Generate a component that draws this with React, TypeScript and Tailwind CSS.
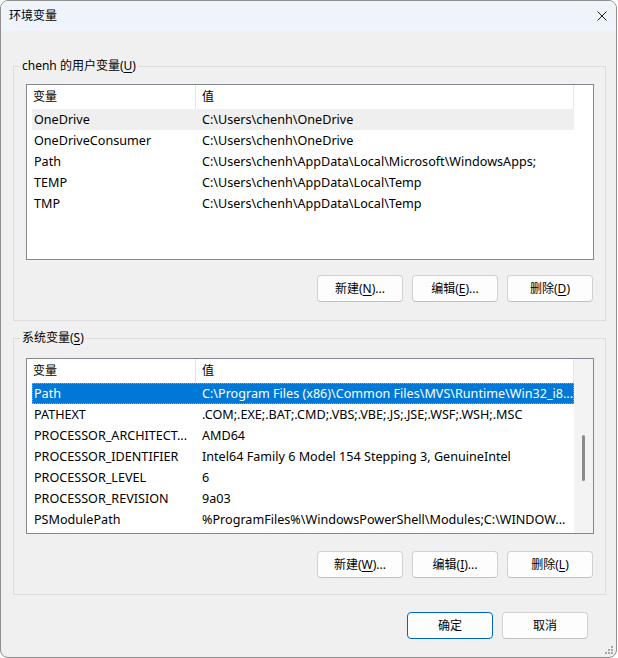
import type { ReactNode } from "react"
import clsx from "clsx"

type EnvVar = { name: string; value: string }

const userVars: EnvVar[] = [
  { name: "OneDrive", value: "C:\\Users\\chenh\\OneDrive" },
  { name: "OneDriveConsumer", value: "C:\\Users\\chenh\\OneDrive" },
  { name: "Path", value: "C:\\Users\\chenh\\AppData\\Local\\Microsoft\\WindowsApps;" },
  { name: "TEMP", value: "C:\\Users\\chenh\\AppData\\Local\\Temp" },
  { name: "TMP", value: "C:\\Users\\chenh\\AppData\\Local\\Temp" },
]

const systemVars: EnvVar[] = [
  { name: "Path", value: "C:\\Program Files (x86)\\Common Files\\MVS\\Runtime\\Win32_i8..." },
  { name: "PATHEXT", value: ".COM;.EXE;.BAT;.CMD;.VBS;.VBE;.JS;.JSE;.WSF;.WSH;.MSC" },
  { name: "PROCESSOR_ARCHITECT...", value: "AMD64" },
  { name: "PROCESSOR_IDENTIFIER", value: "Intel64 Family 6 Model 154 Stepping 3, GenuineIntel" },
  { name: "PROCESSOR_LEVEL", value: "6" },
  { name: "PROCESSOR_REVISION", value: "9a03" },
  { name: "PSModulePath", value: "%ProgramFiles%\\WindowsPowerShell\\Modules;C:\\WINDOW..." },
]

/** 带下划线的快捷键字母 */
function Accel({ children }: { children: ReactNode }) {
  return <span className="underline underline-offset-[2px]">{children}</span>
}

function WinButton({ children, isDefault }: { children: ReactNode; isDefault?: boolean }) {
  return (
    <button
      type="button"
      className={clsx(
        "flex h-[27px] w-[86px] items-center justify-center rounded-[4px] border bg-[#fdfdfd] text-[12px] leading-none text-black",
        isDefault ? "border-[#0067c0]" : "border-[#d0d0d0] border-b-[#c2c2c2]"
      )}
    >
      {children}
    </button>
  )
}

function VarList({
  vars,
  hoverRow,
  selectedRow,
  scrollbar,
}: {
  vars: EnvVar[]
  hoverRow?: number
  selectedRow?: number
  scrollbar?: boolean
}) {
  return (
    <div className="flex h-[176px] border border-[#828790] bg-white text-[12.6px]">
      <div className="flex w-[547px] flex-col">
        {/* 表头 */}
        <div className="flex h-[24px] shrink-0 items-center text-[12px]">
          <div className="flex h-full w-[169px] items-center border-r border-[#e5e5e5] pl-[6px]">变量</div>
          <div className="flex h-full w-[378px] items-center border-r border-[#e5e5e5] pl-[6px]">值</div>
        </div>

        {/* 行 */}
        <div className="flex flex-col pl-[5px]">
          {vars.map((v, i) => (
            <div
              key={v.name}
              className={clsx(
                "flex h-[21px] w-[542px] items-center pt-[2px]",
                i === selectedRow && "bg-[#0078d7] text-white outline outline-1 outline-dotted -outline-offset-1 outline-[#ff8728]",
                i === hoverRow && "bg-[#efefef]"
              )}
            >
              <div className="w-[164px] truncate pl-[2px]">{v.name}</div>
              <div className="min-w-0 flex-1 truncate pl-[6px]">{v.value}</div>
            </div>
          ))}
        </div>
      </div>

      {/* 纵向滚动条 */}
      {scrollbar && (
        <div className="flex flex-1 justify-center bg-[#f3f3f3]">
          <div className="mt-[76px] h-[46px] w-[3px] rounded-full bg-[#8b8b8b]" />
        </div>
      )}
    </div>
  )
}

function GroupBox({
  title,
  className,
  children,
}: {
  title: ReactNode
  className?: string
  children: ReactNode
}) {
  return (
    <fieldset
      className={clsx(
        "ml-[12px] w-[593px] border border-[#dcdcdc] pl-[12px] pr-[11px]",
        className
      )}
    >
      <legend className="-ml-[6px] h-[16px] px-[2px] leading-[16px]">{title}</legend>
      {children}
    </fieldset>
  )
}

export default function App() {
  return (
    <div className="h-[658px] w-[618px] bg-white [font-family:'Noto_Sans','Noto_Sans_CJK_SC',sans-serif] text-[12px] text-black">
      <div className="relative flex h-[658px] w-[617px] flex-col overflow-hidden rounded-[8px] border border-[#8f8f8f] bg-[#f0f0f0]">
        {/* 标题栏 */}
        <div className="flex h-[30px] shrink-0 items-center justify-between bg-[#eef4f9] pl-[8px] pr-[9px]">
          <span className="leading-none">环境变量</span>
          <svg viewBox="0 0 10 10" className="size-[10px]" stroke="#1b1b1b" strokeWidth="1">
            <path d="M0.5 0.5 9.5 9.5M9.5 0.5 0.5 9.5" />
          </svg>
        </div>

        {/* 用户变量 */}
        <GroupBox
          className="mt-[27px] pb-[18px] pt-[10px]"
          title={
            <>
              chenh 的用户变量(<Accel>U</Accel>)
            </>
          }
        >
          <VarList vars={userVars} hoverRow={0} />
          <div className="mt-[15px] flex justify-end gap-[9px] pr-[1px]">
            <WinButton>
              新建(<Accel>N</Accel>)...
            </WinButton>
            <WinButton>
              编辑(<Accel>E</Accel>)...
            </WinButton>
            <WinButton>
              删除(<Accel>D</Accel>)
            </WinButton>
          </div>
        </GroupBox>

        {/* 系统变量 */}
        <GroupBox
          className="mt-[9px] pb-[16px] pt-[12px]"
          title={
            <>
              系统变量(<Accel>S</Accel>)
            </>
          }
        >
          <VarList vars={systemVars} selectedRow={0} scrollbar />
          <div className="mt-[17px] flex justify-end gap-[9px] pr-[1px]">
            <WinButton>
              新建(<Accel>W</Accel>)...
            </WinButton>
            <WinButton>
              编辑(<Accel>I</Accel>)...
            </WinButton>
            <WinButton>
              删除(<Accel>L</Accel>)
            </WinButton>
          </div>
        </GroupBox>

        {/* 确定 / 取消 */}
        <div className="mt-[17px] flex justify-end gap-[9px] pr-[28px]">
          <WinButton isDefault>确定</WinButton>
          <WinButton>取消</WinButton>
        </div>

        {/* 右下角拖动柄 */}
        <div className="absolute bottom-[3px] right-[3px] grid grid-cols-3 gap-[1px]">
          <span />
          <span />
          <span className="size-[2px] bg-[#a8a8a8]" />
          <span />
          <span className="size-[2px] bg-[#a8a8a8]" />
          <span className="size-[2px] bg-[#a8a8a8]" />
          <span className="size-[2px] bg-[#a8a8a8]" />
          <span className="size-[2px] bg-[#a8a8a8]" />
          <span className="size-[2px] bg-[#a8a8a8]" />
        </div>
      </div>
    </div>
  )
}
